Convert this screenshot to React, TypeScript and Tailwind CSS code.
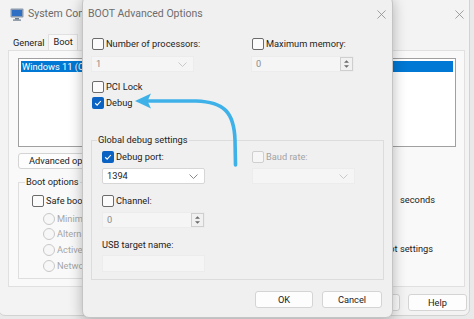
import React from 'react'

type CheckProps = { checked?: boolean; disabled?: boolean }

function Check({ checked, disabled }: CheckProps) {
  if (checked) {
    return (
      <span className="flex h-[12px] w-[12px] shrink-0 items-center justify-center rounded-[2px] bg-[#0a63c2]">
        <svg viewBox="0 0 12 12" className="h-[10px] w-[10px]">
          <path d="M2.6 6.3 L5 8.6 L9.4 3.6" stroke="#ffffff" strokeWidth="1.3" fill="none" />
        </svg>
      </span>
    )
  }
  return (
    <span
      className={
        disabled
          ? 'h-[12px] w-[12px] shrink-0 rounded-[2px] border border-[#cfcfcf] bg-[#f6f6f6]'
          : 'h-[12px] w-[12px] shrink-0 rounded-[2px] border border-[#6b6b6b] bg-[#fbfbfb]'
      }
    />
  )
}

function CheckRow({ label, checked, disabled }: { label: string; checked?: boolean; disabled?: boolean }) {
  return (
    <div className="flex h-[14px] items-center gap-[2px] whitespace-nowrap">
      <Check checked={checked} disabled={disabled} />
      <span className={disabled ? 'text-[#a3a3a3]' : 'text-[#1c1c1c]'}>{label}</span>
    </div>
  )
}

function Radio({ label }: { label: string }) {
  return (
    <div className="flex h-[14px] items-center gap-[2px] whitespace-nowrap">
      <span className="h-[12px] w-[12px] shrink-0 rounded-full border border-[#c8c8c8] bg-[#f7f7f7]" />
      <span className="text-[#a6a6a6]">{label}</span>
    </div>
  )
}

function Chevron({ light }: { light?: boolean }) {
  return (
    <svg viewBox="0 0 9 5" className="h-[5px] w-[9px]">
      <path d="M0.5 0.5 L4.5 4.5 L8.5 0.5" stroke={light ? '#c4c4c4' : '#7d7d7d'} strokeWidth="0.9" fill="none" />
    </svg>
  )
}

function Combo({ value, disabled }: { value: string; disabled?: boolean }) {
  return (
    <div
      className={
        disabled
          ? 'flex h-[16px] w-[103px] items-center justify-between border border-[#ececec] bg-[#f5f5f5] pl-[4px] pr-[6px] text-[#8c8c8c]'
          : 'flex h-[16px] w-[103px] items-center justify-between rounded-[2px] border border-[#d6d6d6] bg-[#ffffff] pl-[4px] pr-[6px] text-[#1c1c1c]'
      }
    >
      <span>{value}</span>
      <Chevron light={disabled} />
    </div>
  )
}

function Spin({ value }: { value: string }) {
  return (
    <div className="flex h-[16px] w-[103px] items-stretch border border-[#ececec] bg-[#f5f5f5] text-[#8c8c8c]">
      <span className="flex flex-1 items-center pl-[4px]">{value}</span>
      <span className="flex w-[13px] flex-col items-center justify-center gap-[2px] border border-[#cfcfcf] bg-[#f1f1f1]">
        <svg viewBox="0 0 6 3" className="h-[3px] w-[5px]">
          <path d="M0 3 L3 0 L6 3 Z" fill="#6a6a6a" />
        </svg>
        <svg viewBox="0 0 6 3" className="h-[3px] w-[5px]">
          <path d="M0 0 L3 3 L6 0 Z" fill="#6a6a6a" />
        </svg>
      </span>
    </div>
  )
}

function CloseX() {
  return (
    <svg viewBox="0 0 10 10" className="h-[9px] w-[9px]">
      <path d="M0.5 0.5 L9.5 9.5 M9.5 0.5 L0.5 9.5" stroke="#8d8d8d" strokeWidth="0.9" />
    </svg>
  )
}

function Btn({ label, w }: { label: string; w: string }) {
  return (
    <div className={`flex h-[17px] items-center justify-center rounded-[3px] border border-[#d4d4d4] bg-[#fdfdfd] text-[#1c1c1c] ${w}`}>
      {label}
    </div>
  )
}

export default function App() {
  return (
    <div className="relative h-[319px] w-[474px] overflow-hidden bg-[#e9e9e9] font-['Roboto','Segoe_UI',sans-serif] text-[9.25px] leading-[14px]">
      {/* System Configuration (behind) */}
      <div className="absolute left-[-2px] top-[-8px] flex h-[324px] w-[472px] flex-col rounded-[7px] border border-[#d2d2d2] bg-[#f3f3f3]">
        <div className="flex h-[42px] shrink-0 items-center justify-between pl-[11px] pr-[5px]">
          <div className="flex items-center gap-[4px]">
            <svg viewBox="0 0 14 13" className="h-[13px] w-[14px]">
              <rect x="0.5" y="0.5" width="13" height="9" rx="1" fill="#8a9bb0" />
              <rect x="2" y="2" width="10" height="6" fill="#2f6fc4" />
              <rect x="5" y="10" width="4" height="1.5" fill="#6b7b8e" />
              <rect x="3" y="11.5" width="8" height="1.2" fill="#6b7b8e" />
            </svg>
            <span className="text-[10.5px] text-[#6a6a6a]">System Configuration</span>
          </div>
          <CloseX />
        </div>
        <div className="flex h-[15px] shrink-0 items-end pl-[10px]">
          <span className="px-[4px] text-[#1c1c1c]">General</span>
          <span className="h-[16px] border-x border-t border-[#e0e0e0] bg-[#f9f9f9] px-[4px] text-[#1c1c1c]">Boot</span>
        </div>
        <div className="ml-[9px] flex h-[237px] w-[457px] shrink-0 flex-col border border-[#e0e0e0] bg-[#f9f9f9] pl-[9px] pr-[8px] pt-[7px]">
          <div className="h-[89px] w-[438px] border border-[#a0a0a0] bg-[#ffffff] p-[2px]">
            <div className="flex h-[11px] items-center bg-[#0078d4] pl-[1px] text-[#ffffff]">
              Windows 11 (C:\WINDOWS) : Current OS; Default OS
            </div>
          </div>
          <div className="mt-[6px] flex h-[16px] w-[130px] items-center rounded-[3px] border border-[#d4d4d4] bg-[#fdfdfd] pl-[10px] text-[#1c1c1c]">
            Advanced options...
          </div>
          <div className="flex">
            <fieldset className="mt-[6px] w-[210px] border border-[#dedede] pb-[5px] pl-[13px]">
              <legend className="ml-[-7px] px-[1px] text-[#1c1c1c]">Boot options</legend>
              <div className="mt-[5px]">
                <CheckRow label="Safe boot" />
              </div>
              <div className="ml-[11px] flex flex-col">
                <div className="mt-[4px]">
                  <Radio label="Minimal" />
                </div>
                <div className="mt-[1px]">
                  <Radio label="Alternate shell" />
                </div>
                <div className="mt-[2px]">
                  <Radio label="Active Directory repair" />
                </div>
                <div className="mt-[2px]">
                  <Radio label="Network" />
                </div>
              </div>
            </fieldset>
            <div className="flex flex-1 flex-col items-end">
              <div className="mr-[21px] mt-[24px] flex h-[14px] items-center gap-[10px] text-[#1c1c1c]">
                <span>Timeout:</span>
                <span className="h-[14px] w-[40px] border border-[#d4d4d4] bg-[#ffffff] pl-[3px]">30</span>
                <span>seconds</span>
              </div>
              <div className="mr-[23px] mt-[35px] flex h-[14px] items-center gap-[2px] text-[#1c1c1c]">
                <Check />
                <span>Make all boot settings</span>
              </div>
            </div>
          </div>
        </div>
        <div className="mt-[7px] flex justify-end gap-[8px] pr-[2px]">
          <Btn label="OK" w="w-[59px]" />
          <Btn label="Cancel" w="w-[59px]" />
          <Btn label="Apply" w="w-[59px]" />
          <Btn label="Help" w="w-[59px]" />
        </div>
      </div>

      {/* BOOT Advanced Options dialog */}
      <div className="absolute left-[82px] top-[-4px] flex h-[322px] w-[311px] flex-col rounded-[7px] border border-[#c4c4c4] bg-[#f0f0f0] shadow-[0_3px_14px_rgba(0,0,0,0.28)]">
        <div className="flex h-[34px] shrink-0 items-center justify-between pl-[5px] pr-[6px]">
          <span className="text-[10.5px] text-[#6d6d6d]">BOOT Advanced Options</span>
          <CloseX />
        </div>
        <div className="flex flex-col px-[8px]">
          <div className="mt-[6px] grid grid-cols-[160px_1fr]">
            <div className="ml-[1px]">
              <CheckRow label="Number of processors:" />
            </div>
            <div className="ml-[1px]">
              <CheckRow label="Maximum memory:" />
            </div>
          </div>
          <div className="mt-[5px] grid grid-cols-[160px_1fr]">
            <Combo value="1" disabled />
            <Spin value="0" />
          </div>
          <div className="ml-[1px] mt-[8px]">
            <CheckRow label="PCI Lock" />
          </div>
          <div className="ml-[1px] mt-[2px]">
            <CheckRow label="Debug" checked />
          </div>
          <fieldset className="mt-[23px] border border-[#dcdcdc] px-[10px] pb-[7px]">
            <legend className="ml-[-5px] px-[1px] text-[#1c1c1c]">Global debug settings</legend>
            <div className="mt-[3px] grid grid-cols-[150px_1fr]">
              <CheckRow label="Debug port:" checked />
              <CheckRow label="Baud rate:" disabled />
            </div>
            <div className="mt-[4px] grid grid-cols-[150px_1fr]">
              <Combo value="1394" />
              <Combo value="" disabled />
            </div>
            <div className="mt-[10px]">
              <CheckRow label="Channel:" />
            </div>
            <div className="mt-[4px]">
              <Spin value="0" />
            </div>
            <div className="mt-[10px] h-[14px] text-[#1c1c1c]">USB target name:</div>
            <div className="mt-[3px] h-[17px] w-[103px] border border-[#ececec] bg-[#f5f5f5]" />
          </fieldset>
          <div className="mr-[2px] mt-[11px] flex justify-end gap-[9px]">
            <Btn label="OK" w="w-[58px]" />
            <Btn label="Cancel" w="w-[60px]" />
          </div>
        </div>
      </div>

      {/* annotation arrow */}
      <svg viewBox="0 0 474 319" className="pointer-events-none absolute left-0 top-0 h-[319px] w-[474px]">
        <path
          d="M235.5 165 L235 140 C234 112 224 102 196 101 L146 101"
          stroke="#3fb1e9"
          strokeWidth="3.6"
          fill="none"
          strokeLinecap="round"
        />
        <path d="M135 101 L151 93.5 L147.5 101 L151 108.5 Z" fill="#3fb1e9" />
      </svg>
    </div>
  )
}
